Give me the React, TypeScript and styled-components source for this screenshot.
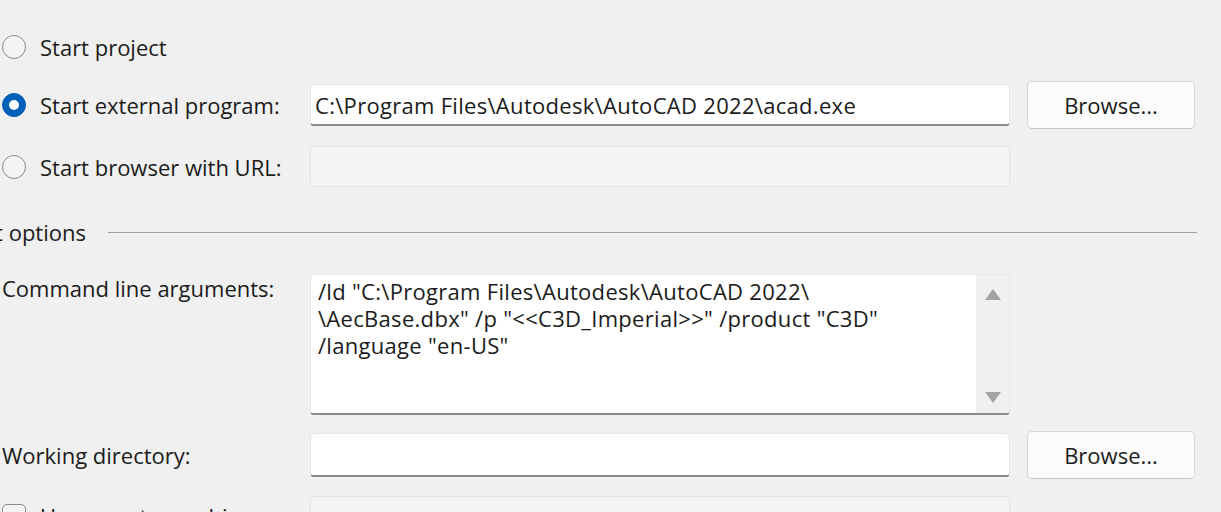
import React from "react";
import styled, { createGlobalStyle } from "styled-components";

const GlobalStyle = createGlobalStyle`
  html, body {
    margin: 0;
    padding: 0;
    background: #f0f0f0;
    overflow: hidden;
  }
  body {
    font-family: "Open Sans", "Noto Sans", "DejaVu Sans", sans-serif;
    font-size: 22px;
    color: #1b1b1b;
  }
`;

const Page = styled("div")`
  width: 1221px;
  height: 512px;
  overflow: hidden;
  padding: 27px 24px 0 2px;
  box-sizing: border-box;
  display: flex;
  flex-direction: column;
`;

const Row = styled("div")<{ $h: number; $top?: number; $align?: string }>`
  display: grid;
  grid-template-columns: 291px 700px 168px;
  column-gap: 17px;
  align-items: ${(p) => p.$align || "center"};
  height: ${(p) => p.$h}px;
  margin-top: ${(p) => p.$top || 0}px;
  flex-shrink: 0;
`;

const Choice = styled("label")<{ $pad?: number }>`
  display: flex;
  align-items: center;
  gap: 14px;
  white-space: nowrap;
  line-height: 28px;
  padding-top: ${(p) => p.$pad || 0}px;
`;

const Label = styled("div")`
  white-space: nowrap;
  line-height: 28px;
`;

const Radio = styled("span")<{ $on?: boolean }>`
  width: 24px;
  height: 24px;
  border-radius: 50%;
  box-sizing: border-box;
  flex-shrink: 0;
  display: flex;
  align-items: center;
  justify-content: center;
  background: ${(p) => (p.$on ? "#005fb8" : "#f4f4f4")};
  border: 1px solid ${(p) => (p.$on ? "#005fb8" : "#8b8b8b")};
  &::after {
    content: "";
    display: ${(p) => (p.$on ? "block" : "none")};
    width: 10px;
    height: 10px;
    border-radius: 50%;
    background: #ffffff;
  }
`;

const Check = styled("span")`
  width: 24px;
  height: 24px;
  border-radius: 5px;
  box-sizing: border-box;
  flex-shrink: 0;
  background: #f4f4f4;
  border: 1px solid #8b8b8b;
`;

const Field = styled("div")<{ $h: number; $disabled?: boolean }>`
  height: ${(p) => p.$h}px;
  box-sizing: border-box;
  border-radius: 4px;
  display: flex;
  align-items: center;
  padding: 0 4px;
  white-space: nowrap;
  overflow: hidden;
  letter-spacing: 0.3px;
  background: ${(p) => (p.$disabled ? "#f5f5f5" : "#ffffff")};
  border: 1px solid ${(p) => (p.$disabled ? "#e3e3e3" : "#e6e6e6")};
  border-bottom: ${(p) => (p.$disabled ? "1px solid #e3e3e3" : "2px solid #8a8a8a")};
  align-self: ${(p) => (p.$disabled ? "start" : "center")};
`;

const Button = styled("button")`
  height: 48px;
  width: 168px;
  box-sizing: border-box;
  border-radius: 5px;
  border: 1px solid #d6d6d6;
  border-bottom-color: #c4c4c4;
  background: #fbfbfb;
  font-family: inherit;
  font-size: 22px;
  color: #1b1b1b;
  padding: 0;
`;

const Section = styled("div")`
  display: flex;
  align-items: center;
  gap: 22px;
  height: 30px;
  margin-top: 30px;
  margin-left: -48px;
  flex-shrink: 0;
  white-space: nowrap;
`;

const Rule = styled("div")`
  flex: 1;
  height: 1px;
  background: #a0a0a0;
  margin-top: 1px;
`;

const TextBox = styled("div")`
  height: 141px;
  box-sizing: border-box;
  border-radius: 4px;
  background: #ffffff;
  border: 1px solid #e6e6e6;
  border-bottom: 2px solid #8a8a8a;
  display: flex;
  overflow: hidden;
`;

const TextLines = styled("div")`
  flex: 1;
  padding: 3px 7px;
  line-height: 27px;
  white-space: nowrap;
  letter-spacing: 0.3px;
`;

const ScrollBar = styled("div")`
  width: 33px;
  background: #f0f0f0;
  display: flex;
  flex-direction: column;
  align-items: center;
  justify-content: space-between;
  padding: 14px 0 10px;
  box-sizing: border-box;
`;

const Arrow = styled("span")<{ $down?: boolean }>`
  width: 0;
  height: 0;
  border-left: 8px solid transparent;
  border-right: 8px solid transparent;
  ${(p) =>
    p.$down
      ? "border-top: 11px solid #a3a3a3;"
      : "border-bottom: 11px solid #a3a3a3;"}
`;

const args = [
  '/ld "C:\\Program Files\\Autodesk\\AutoCAD 2022\\',
  '\\AecBase.dbx" /p "<<C3D_Imperial>>" /product "C3D"',
  '/language "en-US"',
];

const App = () => {
  return (
    <>
      <GlobalStyle />
      <Page>
        <Row $h={40}>
          <Choice>
            <Radio />
            Start project
          </Choice>
        </Row>
        <Row $h={48} $top={14}>
          <Choice>
            <Radio $on />
            Start external program:
          </Choice>
          <Field $h={42}>C:\Program Files\Autodesk\AutoCAD 2022\acad.exe</Field>
          <Button>Browse...</Button>
        </Row>
        <Row $h={41} $top={17}>
          <Choice>
            <Radio />
            Start browser with URL:
          </Choice>
          <Field $h={41} $disabled />
        </Row>

        <Section>
          Start options
          <Rule />
        </Section>

        <Row $h={141} $top={27} $align="start">
          <Label>Command line arguments:</Label>
          <TextBox>
            <TextLines>
              {args.map((line, i) => (
                <React.Fragment key={line}>
                  {i > 0 && <br />}
                  {line}
                </React.Fragment>
              ))}
            </TextLines>
            <ScrollBar>
              <Arrow />
              <Arrow $down />
            </ScrollBar>
          </TextBox>
        </Row>

        <Row $h={48} $top={16}>
          <Label>Working directory:</Label>
          <Field $h={44} />
          <Button>Browse...</Button>
        </Row>

        <Row $h={41} $top={17} $align="start">
          <Choice $pad={6}>
            <Check />
            Use remote machine
          </Choice>
          <Field $h={41} $disabled />
        </Row>
      </Page>
    </>
  );
};

export default App;
